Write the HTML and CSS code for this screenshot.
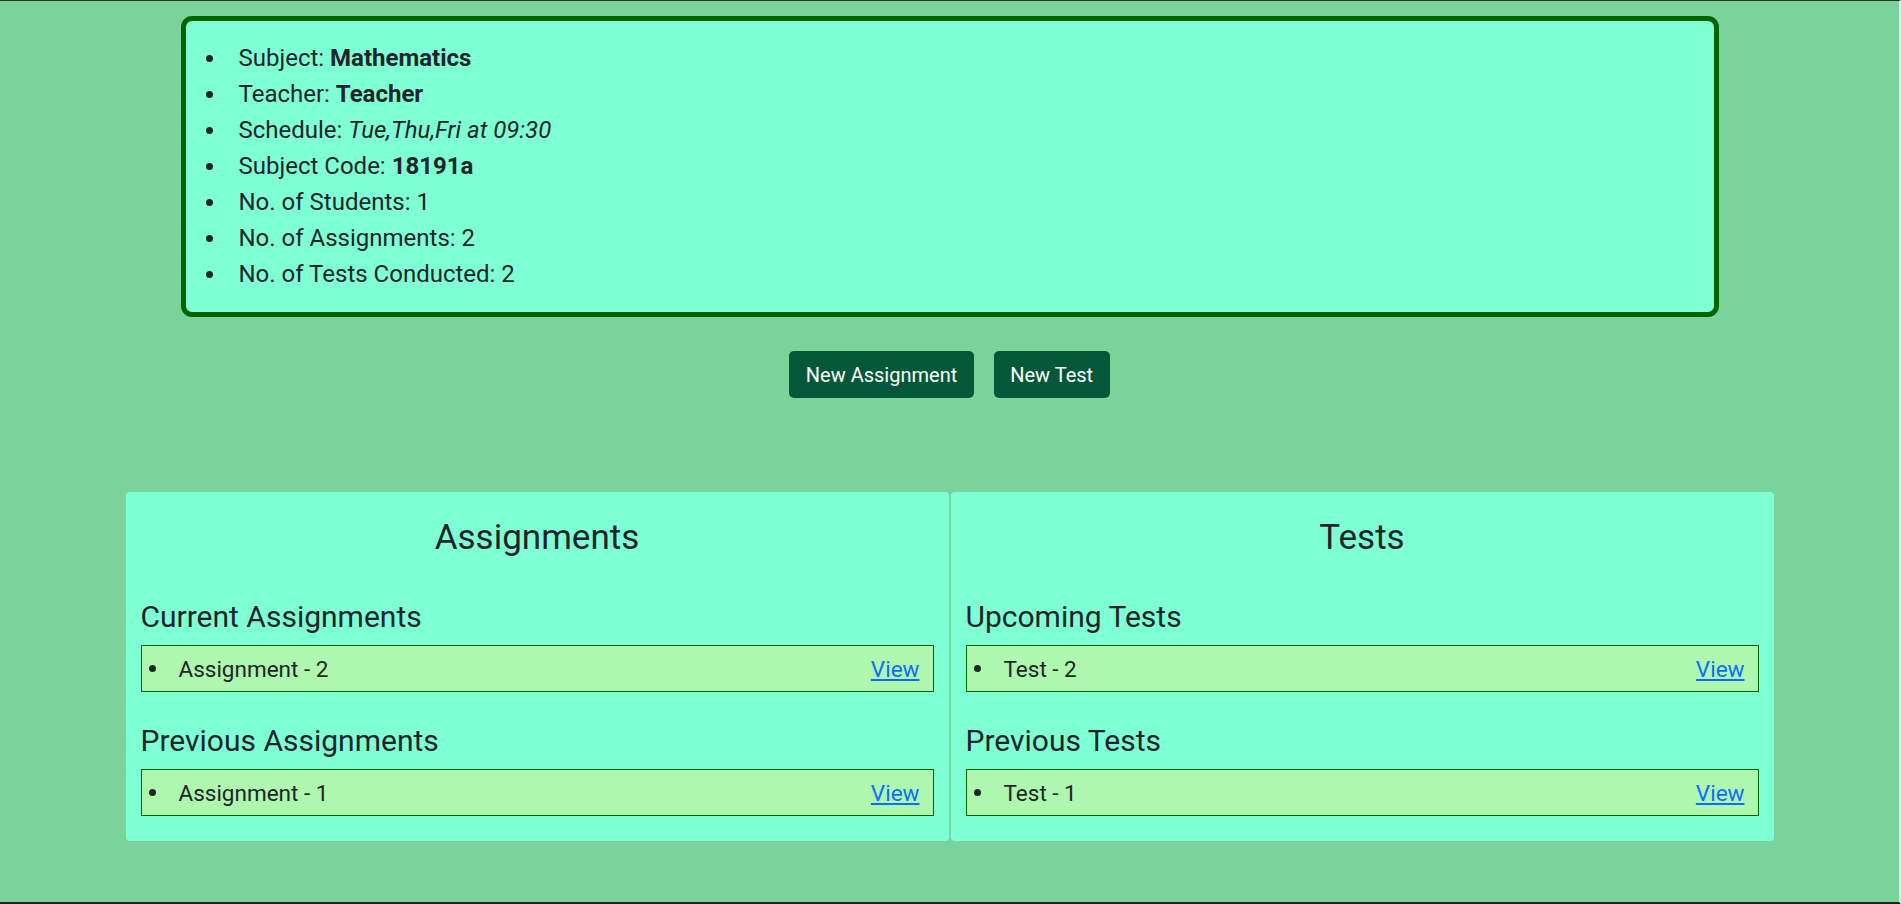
FILE: index.html
```html
<!DOCTYPE html>
<html lang="en">
<head>
<meta charset="utf-8">
<title>Mathematics</title>
<link rel="stylesheet" href="styles.css">
</head>
<body>
<div class="screen">
  <main class="page">
    <section class="info">
      <ul class="info-list">
        <li><span>Subject: <b>Mathematics</b></span></li>
        <li><span>Teacher: <b>Teacher</b></span></li>
        <li><span>Schedule: <i>Tue,Thu,Fri at 09:30</i></span></li>
        <li><span>Subject Code: <b>18191a</b></span></li>
        <li><span>No. of Students: 1</span></li>
        <li><span>No. of Assignments: 2</span></li>
        <li><span>No. of Tests Conducted: 2</span></li>
      </ul>
    </section>

    <div class="actions">
      <button class="btn" type="button">New Assignment</button>
      <button class="btn" type="button">New Test</button>
    </div>

    <div class="cards">
      <section class="card">
        <h3 class="card-title">Assignments</h3>
        <div class="group">
          <h4 class="group-title">Current Assignments</h4>
          <ul class="items">
            <li class="item"><span class="item-name">Assignment - 2</span><a class="item-link" href="#">View</a></li>
          </ul>
        </div>
        <div class="group">
          <h4 class="group-title">Previous Assignments</h4>
          <ul class="items">
            <li class="item"><span class="item-name">Assignment - 1</span><a class="item-link" href="#">View</a></li>
          </ul>
        </div>
      </section>
      <section class="card">
        <h3 class="card-title">Tests</h3>
        <div class="group">
          <h4 class="group-title">Upcoming Tests</h4>
          <ul class="items">
            <li class="item"><span class="item-name">Test - 2</span><a class="item-link" href="#">View</a></li>
          </ul>
        </div>
        <div class="group">
          <h4 class="group-title">Previous Tests</h4>
          <ul class="items">
            <li class="item"><span class="item-name">Test - 1</span><a class="item-link" href="#">View</a></li>
          </ul>
        </div>
      </section>
    </div>
  </main>
</div>
</body>
</html>
```

FILE: styles.css
```css
html, body {
  margin: 0;
  padding: 0;
}

body {
  font-family: Roboto, "Liberation Sans", sans-serif;
  color: #212529;
  background: #7bd39c;
}

.screen {
  height: 904px;
  box-sizing: border-box;
  background: #7bd39c;
  border-top: 1px solid #2e2e2e;
  border-bottom: 2px solid #1a2421;
  border-right: 2px solid #e4efe8;
  overflow: hidden;
}

.info {
  width: 1538px;
  box-sizing: border-box;
  margin: 15px auto 0;
  background: #7fffd4;
  border: 5px solid #006400;
  border-radius: 11px;
  padding: 19px 20px 20px;
}

.info-list {
  list-style: none;
  margin: 0;
  padding: 0;
  font-size: 24px;
  line-height: 36px;
}

.info-list li {
  display: flex;
  align-items: center;
}

.info-list li::before {
  content: "";
  flex: none;
  width: 7px;
  height: 7px;
  border-radius: 50%;
  background: #212529;
  margin-right: 26px;
}

.info-list b {
  font-weight: 700;
}

.actions {
  display: flex;
  justify-content: center;
  gap: 20px;
  margin-top: 34px;
}

.btn {
  height: 47px;
  padding: 0 16.5px;
  font-family: Roboto, "Liberation Sans", sans-serif;
  font-size: 20px;
  color: #ffffff;
  background: #04583a;
  border: 0;
  border-radius: 5px;
  cursor: pointer;
}

.cards {
  display: flex;
  justify-content: center;
  gap: 2px;
  margin-top: 94px;
}

.card {
  width: 823px;
  box-sizing: border-box;
  background: #7fffd4;
  border-radius: 4px;
  padding: 25px 15px 25px;
}

.card-title {
  margin: 0 0 40px;
  font-size: 35px;
  font-weight: 400;
  line-height: 42px;
  text-align: center;
}

.group + .group {
  margin-top: 31px;
}

.group-title {
  margin: 0 0 11px;
  font-size: 30px;
  font-weight: 400;
  line-height: 35px;
}

.items {
  list-style: none;
  margin: 0;
  padding: 0;
}

.item {
  display: flex;
  align-items: center;
  justify-content: space-between;
  height: 47px;
  box-sizing: border-box;
  border: 1px solid #006400;
  background: #aef7ae;
  padding: 0 13px 0 7px;
  font-size: 22.5px;
}

.item-name {
  display: flex;
  align-items: center;
}

.item-name::before {
  content: "";
  flex: none;
  width: 7px;
  height: 7px;
  border-radius: 50%;
  background: #212529;
  margin-right: 23px;
}

.item-link {
  color: #0d6efd;
  text-decoration: underline;
}
```
